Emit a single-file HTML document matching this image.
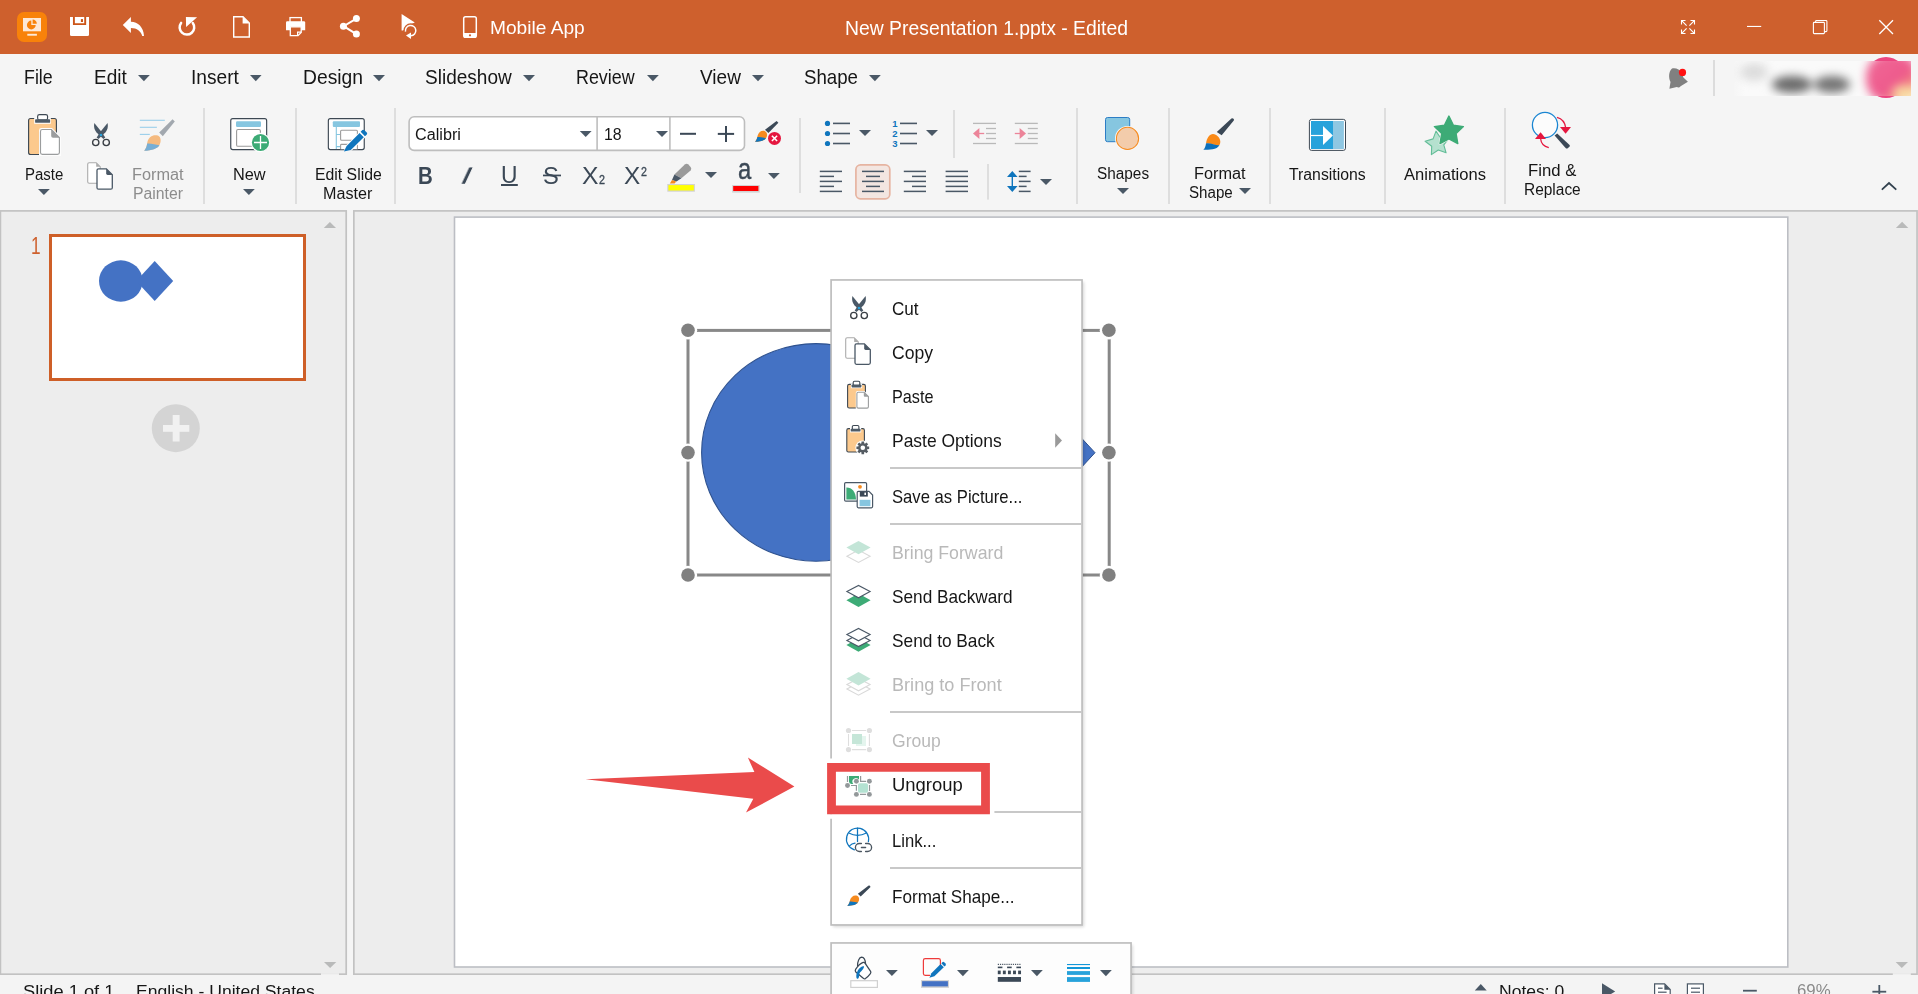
<!DOCTYPE html>
<html lang="en">
<head>
<meta charset="utf-8">
<title>New Presentation 1.pptx - Edited</title>
<style>
html,body{margin:0;padding:0;background:#F5F5F5;}
body{width:1918px;height:994px;overflow:hidden;font-family:"Liberation Sans",sans-serif;}
#app{position:relative;width:1918px;height:994px;overflow:hidden;background:#F5F5F5;}
#app div,#app span,#app svg,#app button,#app li,#app ul,#app header,#app nav,#app section,#app aside,#app main,#app footer{position:absolute;margin:0;padding:0;border:0;background:none;list-style:none;}
#app .grp{position:static;}
.t{white-space:nowrap;transform-origin:0 0;display:block;}
.i{overflow:visible;display:block;}
</style>
</head>
<body>
<div id="app">
<header class="grp" id="titlebar">
<div class="b bar" style="left:0px;top:0px;width:1918px;height:54px;background:#CE602D;"></div>
<svg class="i" style="left:17px;top:12px;" width="30" height="30" viewBox="17 12 30 30"><rect x="17" y="12" width="30" height="30" rx="7" fill="#F8820A"/><rect x="23" y="18" width="18" height="13.3" fill="#FDE8D6"/><path d="M31.3 20.6 A4.4 4.4 0 1 0 35.7 25 H31.3 Z" fill="#F8820A"/><path d="M32.6 19.6 A4.2 4.2 0 0 1 36.8 23.8 H32.6 Z" fill="#F8820A"/><rect x="27.3" y="33.8" width="9.6" height="1.9" fill="#FDE8D6"/></svg>
<svg class="i" style="left:70px;top:17px;" width="19" height="19" viewBox="70 17 19 19"><path d="M70 17 H89 V34.5 Q89 36 87.5 36 H71.5 Q70 36 70 34.5 Z" fill="#fff"/><path d="M73.9 16.6 V24.1 H85.2 V16.6" fill="none" stroke="#CB5519" stroke-width="1.9"/><rect x="80.9" y="19.1" width="2.1" height="2.9" fill="#CB5519"/></svg>
<svg class="i" style="left:123px;top:17px;" width="21" height="19" viewBox="123 17 21 19"><path d="M122.8 24.9 L130.9 17.1 V21.8 C138 21.8 143.5 27.4 144 35.9 H142.2 C141 31.2 137 27.9 130.9 27.9 V33 Z" fill="#fff"/></svg>
<svg class="i" style="left:178px;top:16px;" width="20" height="21" viewBox="178 16 20 21"><path d="M181.1 22.9 A7.3 7.3 0 1 0 192.8 23" fill="none" stroke="#fff" stroke-width="2.5" stroke-linecap="round"/><path d="M185.9 17.1 L197.1 17.3 L186.1 27 Z" fill="#fff"/></svg>
<svg class="i" style="left:232px;top:15px;" width="19" height="24" viewBox="232 15 19 24"><path d="M233.7 16.7 H243 L249.3 23 V37 H233.7 Z" fill="none" stroke="#fff" stroke-width="1.4"/><path d="M242.6 16.7 L249.3 23.4 H242.6 Z" fill="#fff"/></svg>
<svg class="i" style="left:286px;top:16px;" width="19" height="21" viewBox="286 16 19 21"><rect x="290" y="17.6" width="11.4" height="5" fill="none" stroke="#fff" stroke-width="1.3"/><path d="M287.2 21.2 H303.8 Q305.2 21.2 305.2 22.6 V30.2 H286 V22.6 Q286 21.2 287.2 21.2 Z" fill="#fff"/><path d="M290.3 26.8 H301.2 V32.5 L298 35.6 H290.3 Z" fill="#CE602D" stroke="#fff" stroke-width="1.3"/><path d="M301.2 32.2 H297.6 V35.6" fill="none" stroke="#fff" stroke-width="1.2"/></svg>
<svg class="i" style="left:339px;top:14px;" width="22" height="25" viewBox="339 14 22 25"><path d="M356.4 18.6 L343.6 26.2 L356.4 34.1" fill="none" stroke="#fff" stroke-width="2"/><circle cx="356.4" cy="18.6" r="3.5" fill="#fff"/><circle cx="343.4" cy="26.2" r="3.5" fill="#fff"/><circle cx="356.4" cy="34.1" r="3.5" fill="#fff"/></svg>
<svg class="i" style="left:400px;top:13px;" width="19" height="27" viewBox="400 13 19 27"><path d="M401.6 14 L414.8 22.4 L410 24.4 L403.2 30.6 L401.6 30.6 Z" fill="#fff"/><circle cx="410.7" cy="30.6" r="5.2" fill="none" stroke="#CE602D" stroke-width="4.2"/><path d="M405.5 31.6 A5.2 5.2 0 1 1 410.9 35.8" fill="none" stroke="#fff" stroke-width="1.5"/><path d="M406 35.6 L411 32.4 V39 Z" fill="#fff"/></svg>
<svg class="i" style="left:462px;top:15px;" width="16" height="24" viewBox="462 15 16 24"><rect x="463.7" y="16.7" width="12.6" height="20.6" rx="1.8" fill="none" stroke="#fff" stroke-width="1.5"/><path d="M463.7 33 H476.3 V36 Q476.3 37.4 475 37.4 H465 Q463.7 37.4 463.7 36 Z" fill="#fff"/><circle cx="470" cy="35.3" r="1.1" fill="#CE602D"/></svg>
<span class="t tx0" style="left:490.07px;top:17px;font-size:19.25px;line-height:21px;color:#fff;transform:scaleX(0.9948);">Mobile App</span>
<span class="t title tx1" style="left:844.63px;top:17px;font-size:19.50px;line-height:22px;color:#fff;transform:scaleX(0.9925);">New Presentation 1.pptx - Edited</span>
<svg class="i" style="left:1680px;top:19px;" width="16" height="16" viewBox="1680 19 16 16"><g fill="none" stroke="#fff" stroke-width="1.1"><path d="M1681.5 24.5 V20.5 H1685.5 M1681.7 20.7 L1686.6 25.6"/><path d="M1690.5 20.5 H1694.5 V24.5 M1694.3 20.7 L1689.4 25.6"/><path d="M1681.5 29.5 V33.5 H1685.5 M1681.7 33.3 L1686.6 28.4"/><path d="M1690.5 33.5 H1694.5 V29.5 M1694.3 33.3 L1689.4 28.4"/></g></svg>
<svg class="i" style="left:1746px;top:25px;" width="16" height="3" viewBox="1746 25 16 3"><rect x="1747" y="25.9" width="14.2" height="1.1" fill="#fff"/></svg>
<svg class="i" style="left:1812px;top:19px;" width="16" height="16" viewBox="1812 19 16 16"><g fill="none" stroke="#fff" stroke-width="1.1"><rect x="1813.4" y="22.4" width="11" height="11.2" rx="0.8"/><path d="M1815.6 22.4 V21.4 Q1815.6 20.5 1816.5 20.5 H1826 Q1826.9 20.5 1826.9 21.4 V30.8 Q1826.9 31.6 1826 31.6 H1824.6"/></g></svg>
<svg class="i" style="left:1878px;top:19px;" width="16" height="16" viewBox="1878 19 16 16"><path d="M1879.3 20.3 L1893 34 M1893 20.3 L1879.3 34" fill="none" stroke="#fff" stroke-width="1.3"/></svg>
</header>
<nav class="grp" id="menubar">
<span class="t menu tx2" style="left:23.52px;top:66px;font-size:20.25px;line-height:22px;color:#161616;transform:scaleX(0.8792);">File</span>
<span class="t menu tx3" style="left:94.33px;top:66px;font-size:20.25px;line-height:22px;color:#161616;transform:scaleX(0.9409);">Edit</span>
<svg class="i arr" style="left:137px;top:73.8px;" width="13.8" height="8.2" viewBox="137 73.8 13.8 8.2"><polygon points="138,74.8 149.8,74.8 143.9,81" fill="#4a5866"/></svg>
<span class="t menu tx4" style="left:190.81px;top:66px;font-size:20.25px;line-height:22px;color:#161616;transform:scaleX(0.9460);">Insert</span>
<svg class="i arr" style="left:249.4px;top:73.8px;" width="13.6" height="8.2" viewBox="249.4 73.8 13.6 8.2"><polygon points="250.4,74.8 262,74.8 256.2,81" fill="#4a5866"/></svg>
<span class="t menu tx5" style="left:303.32px;top:66px;font-size:20.25px;line-height:22px;color:#161616;transform:scaleX(0.9517);">Design</span>
<svg class="i arr" style="left:372px;top:73.8px;" width="14" height="8.2" viewBox="372 73.8 14 8.2"><polygon points="373,74.8 385,74.8 379,81" fill="#4a5866"/></svg>
<span class="t menu tx6" style="left:425.44px;top:66px;font-size:20.25px;line-height:22px;color:#161616;transform:scaleX(0.9395);">Slideshow</span>
<svg class="i arr" style="left:522px;top:73.8px;" width="14" height="8.2" viewBox="522 73.8 14 8.2"><polygon points="523,74.8 535,74.8 529,81" fill="#4a5866"/></svg>
<span class="t menu tx7" style="left:575.96px;top:66px;font-size:20.25px;line-height:22px;color:#161616;transform:scaleX(0.8830);">Review</span>
<svg class="i arr" style="left:646px;top:73.8px;" width="13.8" height="8.2" viewBox="646 73.8 13.8 8.2"><polygon points="647,74.8 658.8,74.8 652.9,81" fill="#4a5866"/></svg>
<span class="t menu tx8" style="left:699.91px;top:66px;font-size:20.25px;line-height:22px;color:#161616;transform:scaleX(0.9388);">View</span>
<svg class="i arr" style="left:751px;top:73.8px;" width="14" height="8.2" viewBox="751 73.8 14 8.2"><polygon points="752,74.8 764,74.8 758,81" fill="#4a5866"/></svg>
<span class="t menu tx9" style="left:804.36px;top:66px;font-size:20.25px;line-height:22px;color:#161616;transform:scaleX(0.9224);">Shape</span>
<svg class="i arr" style="left:868px;top:73.8px;" width="13.8" height="8.2" viewBox="868 73.8 13.8 8.2"><polygon points="869,74.8 880.8,74.8 874.9,81" fill="#4a5866"/></svg>
<svg class="i" style="left:1666px;top:66px;" width="24" height="24" viewBox="1666 66 24 24"><path d="M1672 68.5 C1675 67.4 1680 69 1682 73.2 L1683.4 77.4 L1687.9 81.7 L1680.6 86.2 C1679.6 87.6 1678 87.8 1676.8 87 L1669.4 88.8 L1670.5 82 C1668.4 77.6 1668.6 71.4 1672 68.5 Z" fill="#808080"/><circle cx="1682.5" cy="72.4" r="3.6" fill="#FF1010"/></svg>
<div class="b sep" style="left:1713.3px;top:60px;width:1.6px;height:36px;background:#DCDCDC;"></div>
<div class="b avatar" style="left:1866px;top:57px;width:40px;height:41px;border-radius:50%;background:#EC4580;"></div>
<div class="b blur" style="left:1734px;top:61px;width:177px;height:35px;overflow:hidden;background:linear-gradient(90deg,#F6F6F6 0,#FAFAFA 12px,#FAFAFA 100%);"><div style="left:0;top:0;width:177px;height:35px;filter:blur(5px);"><div style="left:6px;top:2px;width:28px;height:18px;border-radius:50%;background:#DCDCDC;"></div><div style="left:38px;top:15px;width:40px;height:17px;border-radius:50%;background:#6A6A6A;"></div><div style="left:80px;top:15px;width:36px;height:17px;border-radius:50%;background:#747474;"></div><div style="left:132px;top:-8px;width:52px;height:50px;border-radius:46%;background:linear-gradient(135deg,#F06A98 0%,#EE5A8C 58%,#F28C7E 78%,#F7C98E 100%);"></div><div style="left:158px;top:24px;width:26px;height:16px;border-radius:50%;background:#F8D9A0;"></div></div></div>
</nav><section class="grp" id="toolbar">
<svg class="i sep" style="left:201.75px;top:108px;" width="4" height="96" viewBox="201.75 108 4 96"><rect x="202.9" y="108" width="1.7" height="96" fill="#DADADA"/></svg>
<svg class="i sep" style="left:294px;top:108px;" width="4" height="96" viewBox="294 108 4 96"><rect x="295.15" y="108" width="1.7" height="96" fill="#DADADA"/></svg>
<svg class="i sep" style="left:392.6px;top:108px;" width="4" height="96" viewBox="392.6 108 4 96"><rect x="393.75" y="108" width="1.7" height="96" fill="#DADADA"/></svg>
<svg class="i sep" style="left:797.8px;top:118px;" width="4" height="75" viewBox="797.8 118 4 75"><rect x="798.95" y="118" width="1.7" height="75" fill="#DADADA"/></svg>
<svg class="i sep" style="left:951.8px;top:110px;" width="4" height="48" viewBox="951.8 110 4 48"><rect x="952.95" y="110" width="1.7" height="48" fill="#DADADA"/></svg>
<svg class="i sep" style="left:985.5px;top:164px;" width="4" height="35.6" viewBox="985.5 164 4 35.6"><rect x="986.65" y="164" width="1.7" height="35.6" fill="#DADADA"/></svg>
<svg class="i sep" style="left:1075px;top:108px;" width="4" height="96" viewBox="1075 108 4 96"><rect x="1076.15" y="108" width="1.7" height="96" fill="#DADADA"/></svg>
<svg class="i sep" style="left:1166.8px;top:108px;" width="4" height="96" viewBox="1166.8 108 4 96"><rect x="1167.95" y="108" width="1.7" height="96" fill="#DADADA"/></svg>
<svg class="i sep" style="left:1267.8px;top:108px;" width="4" height="96" viewBox="1267.8 108 4 96"><rect x="1268.95" y="108" width="1.7" height="96" fill="#DADADA"/></svg>
<svg class="i sep" style="left:1382.8px;top:108px;" width="4" height="96" viewBox="1382.8 108 4 96"><rect x="1383.95" y="108" width="1.7" height="96" fill="#DADADA"/></svg>
<svg class="i sep" style="left:1503px;top:108px;" width="4" height="96" viewBox="1503 108 4 96"><rect x="1504.15" y="108" width="1.7" height="96" fill="#DADADA"/></svg>
<svg class="i" style="left:27px;top:113px;" width="34" height="43" viewBox="27 113 34 43"><rect x="28.6" y="118.5" width="27.8" height="36" rx="2" fill="#FCC98D" stroke="#3d4853" stroke-width="1.15"/><rect x="34.2" y="117.6" width="16.6" height="6.2" fill="#FDFDFD"/><rect x="37.65" y="114.55" width="9.9" height="5.6" rx="1.8" fill="#fff" stroke="#3d4853" stroke-width="1.15"/><rect x="35.1" y="119.2" width="15" height="3.6" rx="0.9" fill="#4E5B67"/><path d="M41.4 128 H52 L61 137 V156 H39 V130.4 Q39 128 41.4 128 Z" fill="#FDFDFD"/><path d="M42.4 129.5 H51.4 L59.4 137.5 V152.4 Q59.4 154.3 57.5 154.3 H42.4 Q40.5 154.3 40.5 152.4 V131.4 Q40.5 129.5 42.4 129.5 Z" fill="#fff" stroke="#9B9D9E" stroke-width="1.15"/><path d="M51.2 129.3 L59.6 137.7 H53 Q51.2 137.7 51.2 135.9 Z" fill="#9B9D9E"/></svg>
<span class="t tx10" style="left:24.80px;top:164px;font-size:17.25px;line-height:20px;color:#161616;transform:scaleX(0.8688);">Paste</span>
<svg class="i arr" style="left:37.2px;top:188px;" width="13.8" height="8" viewBox="37.2 188 13.8 8"><polygon points="38.2,189 50,189 44.1,195" fill="#4a5866"/></svg>
<svg class="i" style="left:91px;top:122px;" width="20" height="25" viewBox="91 122 20 25"><path d="M94.30 123.00 L101.25 131.40 L105.25 137.40 L103.45 138.90 L98.55 134.40 C95.35 131.40 93.35 128.60 94.30 123.00 Z" fill="#4a5866"/><path d="M107.60 123.00 L100.65 131.40 L96.65 137.40 L98.45 138.90 L103.35 134.40 C106.55 131.40 108.55 128.60 107.60 123.00 Z" fill="#4a5866"/><circle cx="95.75" cy="142.45" r="3.15" fill="none" stroke="#3a3f45" stroke-width="1.35"/><circle cx="106.25" cy="142.45" r="3.15" fill="none" stroke="#3a3f45" stroke-width="1.35"/><rect x="99.80" y="133.90" width="2.30" height="2.20" fill="#27A2DB"/></svg>
<svg class="i" style="left:86px;top:161px;" width="28" height="30" viewBox="86 161 28 30"><path d="M89.20 162.70 H96.20 L100.20 166.70 V183.20 H89.20 Q87.70 183.20 87.70 181.70 V164.20 Q87.70 162.70 89.20 162.70 Z" fill="#fff" stroke="#ABABAB" stroke-width="1.10"/><path d="M96.20 162.80 L100.20 166.80 H96.20 Z" fill="#ABABAB"/><path d="M98.50 168.80 H106.40 L112.30 174.70 V187.70 Q112.30 189.20 110.80 189.20 H98.50 Q97.00 189.20 97.00 187.70 V170.30 Q97.00 168.80 98.50 168.80 Z" fill="#fff" stroke="#4a5866" stroke-width="1.30"/><path d="M106.20 168.60 L112.50 174.90 H107.60 Q106.20 174.90 106.20 173.50 Z" fill="#4a5866"/></svg>
<svg class="i" style="left:139px;top:118px;" width="37" height="34" viewBox="139 118 37 34"><g opacity="0.55"><rect x="139.8" y="119.75" width="25" height="1.1" fill="#4FB0E2"/><rect x="139.8" y="126.75" width="17.1" height="1.1" fill="#4FB0E2"/><rect x="139.8" y="133.85" width="10" height="1.1" fill="#4FB0E2"/><path d="M172.6 119.2 L174.8 121.4 L162.8 136.2 L159.2 132.6 Z" fill="#5F6B76"/><path d="M147.4 142 C148.6 136.6 153.4 134 158 135.6 C161 137 161.6 141.6 159.2 145.6 C157.6 148.4 152 150.6 144.2 150.8 C146.2 148.6 146.8 145.6 147.4 142 Z" fill="#F68B1F"/><path d="M147.2 143.6 C151 143.2 155.6 145 159.4 145.2 C157.6 148.4 152 150.6 144.2 150.8 C146 148.8 146.8 146.4 147.2 143.6 Z" fill="#0F75BD"/></g></svg>
<span class="t tx11" style="left:132.10px;top:164px;font-size:17.25px;line-height:20px;color:#8c8c8c;transform:scaleX(0.9449);">Format</span>
<span class="t tx12" style="left:133.13px;top:183px;font-size:17.25px;line-height:20px;color:#8c8c8c;transform:scaleX(0.9158);">Painter</span>
<svg class="i" style="left:229px;top:117px;" width="42" height="36" viewBox="229 117 42 36"><rect x="230.75" y="118.65" width="35.9" height="30.9" rx="2" fill="#fff" stroke="#3d4853" stroke-width="1.15"/><rect x="236" y="121.2" width="25" height="5.7" rx="1.2" fill="#86C6E0"/><rect x="236.6" y="129.5" width="23.8" height="16.8" rx="1.4" fill="#fff" stroke="#9A9A9A" stroke-width="1.1"/><circle cx="260.5" cy="142.5" r="9.7" fill="#fff"/><circle cx="260.5" cy="142.5" r="8.6" fill="#3DAB76"/><path d="M254 142.5 H267 M260.5 136 V149" stroke="#fff" stroke-width="1.3" fill="none"/></svg>
<span class="t tx13" style="left:232.69px;top:164px;font-size:17.25px;line-height:20px;color:#161616;transform:scaleX(0.9462);">New</span>
<svg class="i arr" style="left:242px;top:188px;" width="13.8" height="8" viewBox="242 188 13.8 8"><polygon points="243,189 254.8,189 248.9,195" fill="#4a5866"/></svg>
<svg class="i" style="left:326px;top:117px;" width="43" height="36" viewBox="326 117 43 36"><rect x="328.35" y="118.65" width="35.9" height="30.9" rx="2" fill="#fff" stroke="#3d4853" stroke-width="1.15"/><rect x="332.8" y="121.3" width="27.2" height="5.6" rx="1" fill="#86C6E0"/><path d="M336.3 127 V149 M336.3 134.5 H340.4 M336.3 146.6 H340.4" stroke="#86C6E0" stroke-width="1.1" fill="none"/><rect x="340.6" y="130.2" width="16.8" height="10" rx="1" fill="#fff" stroke="#9C9C9C" stroke-width="1.1"/><path d="M340.6 149.2 V145.2 Q340.6 144.4 341.4 144.4 H356.6 Q357.4 144.4 357.4 145.2 V149.2" fill="#fff" stroke="#9C9C9C" stroke-width="1.1"/><path d="M343.4 151.8 L346.2 145.2 L360.6 130.8 L366.2 136.4 L351.8 150.4 Z" fill="#fff"/><path d="M343.9 151.5 L346.6 146 L359.6 133 L363.8 137.2 L350.8 150 Z" fill="#0F75BD"/><path d="M360.6 131.8 L362.4 130 Q363.4 129.2 364.4 130.2 L366.8 132.6 Q367.6 133.6 366.8 134.4 L365 136.2 Z" fill="#0F75BD"/></svg>
<span class="t tx14" style="left:315.13px;top:164px;font-size:17.25px;line-height:20px;color:#161616;transform:scaleX(0.9158);">Edit Slide</span>
<span class="t tx15" style="left:322.71px;top:183px;font-size:17.25px;line-height:20px;color:#161616;transform:scaleX(0.9353);">Master</span>
<svg class="i combo" style="left:407px;top:115px;" width="340" height="38" viewBox="407 115 340 38"><rect x="409.1" y="116.8" width="335.4" height="33.6" rx="5" fill="#fff" stroke="#BEBEBE" stroke-width="1.6"/><rect x="596.3" y="117" width="1.6" height="33.4" fill="#BEBEBE"/><rect x="669.1" y="117" width="1.6" height="33.4" fill="#BEBEBE"/><polygon points="579.8,131 591.6,131 585.7,137" fill="#4a5866"/><polygon points="656,131 668,131 662,137" fill="#4a5866"/><rect x="680" y="132.8" width="16" height="2" fill="#3b4856"/><rect x="717.8" y="132.9" width="16.3" height="2" fill="#3b4856"/><rect x="725" y="126" width="2" height="16" fill="#3b4856"/></svg>
<span class="t tx16" style="left:415.06px;top:124px;font-size:17.25px;line-height:20px;color:#161616;transform:scaleX(0.9383);">Calibri</span>
<span class="t tx17" style="left:603.61px;top:124px;font-size:17.25px;line-height:20px;color:#161616;transform:scaleX(0.9205);">18</span>
<svg class="i" style="left:754px;top:120px;" width="29" height="27" viewBox="754 120 29 27"><path d="M776.6 121 L778.4 122.8 L768.4 133 L765 129.8 Z" fill="#3b4856"/><path d="M757.6 135.8 C758.6 132 762 130 765 131.2 C767.4 132.4 767.8 135.6 766 138.2 C764.6 140.4 760.6 141.6 755 141.8 C756.6 140 757.2 138 757.6 135.8 Z" fill="#F68B1F"/><path d="M757.4 137 C760.4 136.6 763.4 137.8 766 138.2 C764.6 140.4 760.6 141.6 755 141.8 C756.4 140.4 757 138.8 757.4 137 Z" fill="#0F75BD"/><circle cx="774.5" cy="138.4" r="7.6" fill="#F5F5F5"/><circle cx="774.5" cy="138.4" r="6.5" fill="#E5173F"/><path d="M771.9 135.8 L777.1 141 M777.1 135.8 L771.9 141" stroke="#fff" stroke-width="1.6" fill="none"/></svg>
<span class="t fb tx18" style="left:418.42px;top:162px;font-size:24.25px;line-height:27px;color:#3b4856;transform:scaleX(0.8414);font-weight:700;">B</span>
<span class="t fb it" style="left:459.90px;top:162px;font-size:24px;line-height:27px;color:#3b4856;font-weight:700;transform-origin:0 22px;transform:skewX(-25deg) scaleX(0.95);will-change:transform;">I</span>
<span class="t fb tx19" style="left:501.15px;top:161px;font-size:23.84px;line-height:27px;color:#3b4856;transform:scaleX(0.9552);">U</span>
<svg class="i" style="left:500px;top:183px;" width="19" height="4" viewBox="500 183 19 4"><rect x="501" y="184" width="16.8" height="2" fill="#3b4856"/></svg>
<span class="t fb tx20" style="left:542.93px;top:162px;font-size:24.25px;line-height:27px;color:#3b4856;transform:scaleX(0.9788);">S</span>
<svg class="i" style="left:542px;top:174px;" width="20" height="4" viewBox="542 174 20 4"><rect x="543" y="174.6" width="18" height="1.7" fill="#3b4856"/></svg>
<span class="t fb tx21" style="left:581.78px;top:162px;font-size:23.84px;line-height:27px;color:#3b4856;transform:scaleX(1.0352);">X</span>
<span class="t fb tx22" style="left:598.59px;top:172px;font-size:12.75px;line-height:15px;color:#3b4856;transform:scaleX(0.8408);-webkit-text-stroke:0.35px #3b4856;">2</span>
<span class="t fb tx23" style="left:623.66px;top:162px;font-size:23.84px;line-height:27px;color:#3b4856;transform:scaleX(1.0204);">X</span>
<span class="t fb tx24" style="left:640.94px;top:164px;font-size:13.00px;line-height:15px;color:#3b4856;transform:scaleX(0.8183);-webkit-text-stroke:0.35px #3b4856;">2</span>
<svg class="i" style="left:666px;top:162px;" width="30" height="31" viewBox="666 162 30 31"><path d="M684.8 164.6 Q686.6 163 688.4 164.6 L690.6 167 Q692 168.8 690.6 170.6 L681.4 178.2 L674.4 174.4 Z" fill="#9A9A9A"/><path d="M674.4 174.4 L681.4 178.2 L676.4 181.6 L672 180 Z" fill="#4a5866"/><path d="M672 180 L676.2 181.6 L674.6 183.4 L669.8 183.4 Z" fill="#F68B1F"/><rect x="667.3" y="184" width="27.6" height="7.7" fill="#D2D2D2"/><rect x="668.4" y="185.1" width="25.4" height="5.4" fill="#FFFF00"/></svg>
<svg class="i arr" style="left:704px;top:171px;" width="14" height="8" viewBox="704 171 14 8"><polygon points="705,172 717,172 711,178" fill="#4a5866"/></svg>
<span class="t fb tx25" style="left:737.86px;top:152px;font-size:30.00px;line-height:33px;color:#3b4856;transform:scaleX(0.7940);-webkit-text-stroke:0.45px #3b4856;">a</span>
<svg class="i" style="left:731px;top:184px;" width="30" height="9" viewBox="731 184 30 9"><rect x="732.2" y="185" width="27.5" height="7.6" fill="#D2D2D2"/><rect x="733.2" y="186" width="25.2" height="5" fill="#FF0000"/></svg>
<svg class="i arr" style="left:767px;top:172px;" width="13.8" height="8" viewBox="767 172 13.8 8"><polygon points="768,173 779.8,173 773.9,179" fill="#4a5866"/></svg>
<svg class="i" style="left:823px;top:119px;" width="30" height="29" viewBox="823 119 30 29"><circle cx="827.5" cy="123.4" r="2.6" fill="#0F75BD"/><rect x="833" y="122.6" width="17" height="1.6" fill="#4a5866"/><circle cx="827.5" cy="133.5" r="2.6" fill="#0F75BD"/><rect x="833" y="132.7" width="17" height="1.6" fill="#4a5866"/><circle cx="827.5" cy="143.5" r="2.6" fill="#0F75BD"/><rect x="833" y="142.7" width="17" height="1.6" fill="#4a5866"/></svg>
<svg class="i arr" style="left:858px;top:129px;" width="14" height="8" viewBox="858 129 14 8"><polygon points="859,130 871,130 865,136" fill="#4a5866"/></svg>
<svg class="i" style="left:890px;top:117px;" width="30" height="32" viewBox="890 117 30 32"><text x="894.8" y="126.7" font-family="Liberation Sans, sans-serif" font-size="9.5" font-weight="700" fill="#0F75BD" text-anchor="middle">1</text><rect x="900" y="122.6" width="17" height="1.6" fill="#4a5866"/><text x="894.8" y="136.8" font-family="Liberation Sans, sans-serif" font-size="9.5" font-weight="700" fill="#0F75BD" text-anchor="middle">2</text><rect x="900" y="132.7" width="17" height="1.6" fill="#4a5866"/><text x="894.8" y="146.8" font-family="Liberation Sans, sans-serif" font-size="9.5" font-weight="700" fill="#0F75BD" text-anchor="middle">3</text><rect x="900" y="142.7" width="17" height="1.6" fill="#4a5866"/></svg>
<svg class="i arr" style="left:925px;top:129px;" width="14" height="8" viewBox="925 129 14 8"><polygon points="926,130 938,130 932,136" fill="#4a5866"/></svg>
<svg class="i" style="left:972px;top:121px;" width="26" height="25" viewBox="972 121 26 25"><rect x="973" y="122.75" width="23" height="1.3" fill="#B9B9B9"/><rect x="973" y="142.85" width="23" height="1.3" fill="#B9B9B9"/><rect x="986" y="127.85" width="10" height="1.3" fill="#B9B9B9"/><rect x="986" y="132.85" width="10" height="1.3" fill="#B9B9B9"/><rect x="986" y="137.85" width="10" height="1.3" fill="#B9B9B9"/><path d="M973 133.5 L979.4 128 V139 Z" fill="#EC8499"/><rect x="979" y="132.85" width="5.2" height="1.3" fill="#EC8499"/></svg>
<svg class="i" style="left:1013px;top:121px;" width="26" height="25" viewBox="1013 121 26 25"><rect x="1014.8" y="122.75" width="23" height="1.3" fill="#B9B9B9"/><rect x="1014.8" y="142.85" width="23" height="1.3" fill="#B9B9B9"/><rect x="1027.8" y="127.85" width="10" height="1.3" fill="#B9B9B9"/><rect x="1027.8" y="132.85" width="10" height="1.3" fill="#B9B9B9"/><rect x="1027.8" y="137.85" width="10" height="1.3" fill="#B9B9B9"/><path d="M1026 133.5 L1019.6 128 V139 Z" fill="#EC8499"/><rect x="1014.8" y="132.85" width="5.2" height="1.3" fill="#EC8499"/></svg>
<svg class="i" style="left:818px;top:169px;" width="26" height="25" viewBox="818 169 26 25"><rect x="819.8" y="170.65" width="22.2" height="1.5" fill="#4a5866"/><rect x="819.8" y="175.65" width="14.2" height="1.5" fill="#4a5866"/><rect x="819.8" y="180.65" width="22.2" height="1.5" fill="#4a5866"/><rect x="819.8" y="185.65" width="14.2" height="1.5" fill="#4a5866"/><rect x="819.8" y="190.65" width="22.2" height="1.5" fill="#4a5866"/></svg>
<svg class="i active" style="left:854px;top:163px;" width="38" height="38" viewBox="854 163 38 38"><rect x="855.9" y="164.9" width="33.9" height="33.9" rx="4.6" fill="#F3E6E1" stroke="#E6B4A1" stroke-width="1.7"/></svg>
<svg class="i" style="left:860px;top:169px;" width="26" height="25" viewBox="860 169 26 25"><rect x="862" y="170.65" width="22" height="1.5" fill="#4a5866"/><rect x="866" y="175.65" width="14" height="1.5" fill="#4a5866"/><rect x="862" y="180.65" width="22" height="1.5" fill="#4a5866"/><rect x="866" y="185.65" width="14" height="1.5" fill="#4a5866"/><rect x="862" y="190.65" width="22" height="1.5" fill="#4a5866"/></svg>
<svg class="i" style="left:902px;top:169px;" width="26" height="25" viewBox="902 169 26 25"><rect x="903.8" y="170.65" width="22.2" height="1.5" fill="#4a5866"/><rect x="912" y="175.65" width="14" height="1.5" fill="#4a5866"/><rect x="903.8" y="180.65" width="22.2" height="1.5" fill="#4a5866"/><rect x="912" y="185.65" width="14" height="1.5" fill="#4a5866"/><rect x="903.8" y="190.65" width="22.2" height="1.5" fill="#4a5866"/></svg>
<svg class="i" style="left:944px;top:169px;" width="26" height="25" viewBox="944 169 26 25"><rect x="945.6" y="170.65" width="22.4" height="1.5" fill="#4a5866"/><rect x="945.6" y="175.65" width="22.4" height="1.5" fill="#4a5866"/><rect x="945.6" y="180.65" width="22.4" height="1.5" fill="#4a5866"/><rect x="945.6" y="185.65" width="22.4" height="1.5" fill="#4a5866"/><rect x="945.6" y="190.65" width="22.4" height="1.5" fill="#4a5866"/></svg>
<svg class="i" style="left:1006px;top:169px;" width="26" height="25" viewBox="1006 169 26 25"><path d="M1012.3 171 L1017.6 177 H1007 Z M1012.3 192 L1017.6 186 H1007 Z" fill="#0F75BD"/><rect x="1011.6" y="176" width="1.4" height="11" fill="#0F75BD"/><rect x="1018.8" y="170.65" width="11.8" height="1.5" fill="#4a5866"/><rect x="1018.8" y="175.65" width="7.8" height="1.5" fill="#4a5866"/><rect x="1018.8" y="180.65" width="11.8" height="1.5" fill="#4a5866"/><rect x="1018.8" y="185.65" width="7.8" height="1.5" fill="#4a5866"/><rect x="1018.8" y="190.65" width="11.8" height="1.5" fill="#4a5866"/></svg>
<svg class="i arr" style="left:1039px;top:178px;" width="14" height="8" viewBox="1039 178 14 8"><polygon points="1040,179 1052,179 1046,185" fill="#4a5866"/></svg>
<svg class="i" style="left:1104px;top:116px;" width="37" height="36" viewBox="1104 116 37 36"><rect x="1105.5" y="117.5" width="24.2" height="24.2" rx="2" fill="#86C6E0" stroke="#2C7DC5" stroke-width="1"/><circle cx="1127.5" cy="138.4" r="12.5" fill="#F7F7F7"/><circle cx="1127.5" cy="138.4" r="11.1" fill="#F3CCAB" stroke="#F68B1F" stroke-width="1.05"/></svg>
<span class="t tx26" style="left:1097.11px;top:163px;font-size:17.25px;line-height:20px;color:#161616;transform:scaleX(0.8897);">Shapes</span>
<svg class="i arr" style="left:1116px;top:187px;" width="14" height="8" viewBox="1116 187 14 8"><polygon points="1117,188 1129,188 1123,194" fill="#4a5866"/></svg>
<svg class="i" style="left:1202px;top:117px;" width="34" height="34" viewBox="1202 117 34 34"><path d="M1231.40 118.50 Q1232.60 117.80 1233.50 118.70 Q1234.50 119.60 1233.80 120.60 L1221.70 135.20 L1216.80 131.90 Z" fill="#3b4856"/><path d="M1206.00 143.80 C1206.60 138.00 1209.60 134.00 1213.00 134.00 C1216.60 134.20 1220.20 137.80 1220.30 141.40 C1220.30 143.00 1219.90 144.20 1219.20 145.40 C1214.00 145.80 1210.00 142.80 1206.00 143.80 Z" fill="#FA8A18"/><path d="M1206.00 143.40 C1209.60 142.40 1214.40 145.00 1219.30 145.20 C1218.20 147.40 1215.60 148.80 1212.60 149.20 C1209.60 149.70 1206.00 149.80 1203.30 149.80 C1204.80 148.40 1205.60 146.20 1206.00 143.40 Z" fill="#0C70BC"/></svg>
<span class="t tx27" style="left:1194.20px;top:163px;font-size:17.25px;line-height:20px;color:#161616;transform:scaleX(0.9449);">Format</span>
<span class="t tx28" style="left:1188.97px;top:182px;font-size:17.25px;line-height:20px;color:#161616;transform:scaleX(0.8771);">Shape</span>
<svg class="i arr" style="left:1238px;top:187px;" width="14" height="8" viewBox="1238 187 14 8"><polygon points="1239,188 1251,188 1245,194" fill="#4a5866"/></svg>
<svg class="i" style="left:1308px;top:118px;" width="39" height="34" viewBox="1308 118 39 34"><rect x="1309.4" y="119.35" width="36.1" height="31.05" rx="2.2" fill="#fff" stroke="#3d4853" stroke-width="1"/><rect x="1311" y="121" width="22" height="28" fill="#27A2DB"/><rect x="1333" y="121" width="10.9" height="28" fill="#8FC7E2"/><rect x="1310.6" y="134.9" width="12.8" height="1.2" fill="#fff"/><path d="M1323 125.9 L1332.9 135.5 L1323 145.1 Z" fill="#fff"/></svg>
<span class="t tx29" style="left:1288.88px;top:164px;font-size:17.25px;line-height:20px;color:#161616;transform:scaleX(0.9156);">Transitions</span>
<svg class="i" style="left:1424px;top:115px;" width="42" height="40" viewBox="1424 115 42 40"><path d="M1436.0 131.1 L1440.6 138.0 L1448.9 138.3 L1443.8 144.8 L1446.1 152.8 L1438.3 150.0 L1431.4 154.6 L1431.7 146.3 L1425.1 141.2 L1433.1 138.9 Z" fill="#B5E1CF" stroke="#62BD97" stroke-width="1.1" stroke-linejoin="round"/><path d="M1448.9 116.1 L1453.4 125.2 L1463.4 126.6 L1456.1 133.6 L1457.8 143.6 L1448.9 138.9 L1440.0 143.6 L1441.7 133.6 L1434.4 126.6 L1444.4 125.2 Z" fill="#F5F5F5" stroke="#F5F5F5" stroke-width="2.6" stroke-linejoin="round"/><path d="M1448.9 116.1 L1453.4 125.2 L1463.4 126.6 L1456.1 133.6 L1457.8 143.6 L1448.9 138.9 L1440.0 143.6 L1441.7 133.6 L1434.4 126.6 L1444.4 125.2 Z" fill="#3DAB76" stroke="#3DAB76" stroke-width="1.4" stroke-linejoin="round"/></svg>
<span class="t tx30" style="left:1404.30px;top:164px;font-size:17.25px;line-height:20px;color:#161616;transform:scaleX(0.9599);">Animations</span>
<svg class="i" style="left:1530px;top:110px;" width="43" height="40" viewBox="1530 110 43 40"><path d="M1554.6 135.6 L1557.2 133.6 L1569.6 145 Q1570.2 146 1569.4 146.8 L1567.4 148.4 Q1566.4 148.8 1565.6 148 Z" fill="#3b4856"/><circle cx="1545" cy="125" r="12.6" fill="#FCFCFC" stroke="#1B86D2" stroke-width="1.3"/><path d="M1557 117.3 C1561.6 118.6 1565 122.4 1565.6 127.4" fill="none" stroke="#E5173F" stroke-width="1.2"/><path d="M1560 127 H1571 L1565.6 133.8 Z" fill="#E5173F"/><path d="M1540.6 132.2 L1546 138.9 H1535 Z" fill="#E5173F"/><path d="M1540.6 138.6 C1541 143.2 1544.4 146.6 1548.8 147.6" fill="none" stroke="#E5173F" stroke-width="1.2"/></svg>
<span class="t tx31" style="left:1528.46px;top:160px;font-size:17.25px;line-height:20px;color:#161616;transform:scaleX(0.9685);">Find &amp;</span>
<span class="t tx32" style="left:1524.06px;top:179px;font-size:17.25px;line-height:20px;color:#161616;transform:scaleX(0.8961);">Replace</span>
<svg class="i" style="left:1880px;top:181px;" width="18" height="11" viewBox="1880 181 18 11"><path d="M1882.4 189.2 L1889 183 L1895.7 189.2" fill="none" stroke="#33424F" stroke-width="1.8" stroke-linecap="round" stroke-linejoin="miter"/></svg>
</section><aside class="grp" id="thumbnails">
<svg class="i panel" style="left:0px;top:209px;" width="348" height="767" viewBox="0 209 348 767"><rect x="0.4" y="210.9" width="345.8" height="763.3" fill="#EDEDED" stroke="#C2C2C2" stroke-width="1.7"/><rect x="321" y="973.2" width="18" height="2" fill="#F0F0F0"/><polygon points="323.8,228 336,228 329.9,222" fill="#B9BABA"/><polygon points="324,962 336.3,962 330.1,968" fill="#B9BABA"/></svg>
<span class="t num tx33" style="left:30.91px;top:233px;font-size:23.55px;line-height:26px;color:#CE602D;transform:scaleX(0.7322);">1</span>
<div class="b thumb" style="left:49px;top:234px;width:257px;height:147px;box-sizing:border-box;border:3px solid #CE5F28;background:#fff;"><svg class="i" style="left:0;top:0" width="251" height="141" viewBox="52 237 251 141"><ellipse cx="120.8" cy="281" rx="21.8" ry="20.7" fill="#4472C4"/><polygon points="136.2,281 154.7,261 173.2,281 154.7,301" fill="#4472C4"/></svg></div>
<svg class="i addslide" style="left:151px;top:403px;" width="50" height="50" viewBox="151 403 50 50"><circle cx="175.8" cy="428.2" r="24" fill="#D4D4D4"/><rect x="163" y="425" width="26.3" height="6.8" fill="#F1F1F1"/><rect x="172.7" y="415" width="6.9" height="26.5" fill="#F1F1F1"/></svg>
</aside>
<main class="grp" id="editor">
<svg class="i panel" style="left:352px;top:209px;" width="1566" height="767" viewBox="352 209 1566 767"><rect x="353.85" y="210.9" width="1563.2" height="763.3" fill="#EDEDED" stroke="#C2C2C2" stroke-width="1.7"/><rect x="1892.8" y="973.2" width="18" height="2" fill="#F0F0F0"/><polygon points="1895.9,228 1908.3,228 1902.1,221.8" fill="#B9BABA"/><polygon points="1895.6,962 1908,962 1901.8,968" fill="#B9BABA"/></svg>
<svg class="i slide" style="left:453px;top:215px;" width="1337" height="754" viewBox="453 215 1337 754"><rect x="454.5" y="217.1" width="1333.3" height="749.9" fill="#fff" stroke="#BCBEC4" stroke-width="1.6"/></svg>
<svg class="i shapes" style="left:690px;top:335px;" width="420" height="235" viewBox="690 335 420 235"><polygon points="899,452.7 997,346.7 1095,452.7 997,558.7" fill="#4472C4" stroke="#2F528F" stroke-width="1"/><ellipse cx="816" cy="452.4" rx="114.4" ry="108.8" fill="#4472C4" stroke="#2F528F" stroke-width="1.1"/></svg>
<svg class="i selection" style="left:678px;top:320px;" width="442" height="266" viewBox="678 320 442 266"><rect x="688" y="330.4" width="421.2" height="244.6" fill="none" stroke="#888888" stroke-width="3"/><circle cx="688" cy="330.2" r="9.2" fill="#fff"/><circle cx="688" cy="330.2" r="6.8" fill="#808080"/><circle cx="898.6" cy="330.2" r="9.2" fill="#fff"/><circle cx="898.6" cy="330.2" r="6.8" fill="#808080"/><circle cx="1108.9" cy="330.2" r="9.2" fill="#fff"/><circle cx="1108.9" cy="330.2" r="6.8" fill="#808080"/><circle cx="688" cy="452.6" r="9.2" fill="#fff"/><circle cx="688" cy="452.6" r="6.8" fill="#808080"/><circle cx="1108.9" cy="452.6" r="9.2" fill="#fff"/><circle cx="1108.9" cy="452.6" r="6.8" fill="#808080"/><circle cx="688" cy="575" r="9.2" fill="#fff"/><circle cx="688" cy="575" r="6.8" fill="#808080"/><circle cx="898.6" cy="575" r="9.2" fill="#fff"/><circle cx="898.6" cy="575" r="6.8" fill="#808080"/><circle cx="1108.9" cy="575" r="9.2" fill="#fff"/><circle cx="1108.9" cy="575" r="6.8" fill="#808080"/></svg>
</main>
<footer class="grp" id="statusbar">
<div class="b sb" style="left:0px;top:975.1px;width:1918px;height:19px;background:#F4F4F4;"></div>
<span class="t tx34" style="left:22.97px;top:981px;font-size:17.25px;line-height:20px;color:#161616;transform:scaleX(1.0588);">Slide 1 of 1</span>
<span class="t tx35" style="left:135.79px;top:981px;font-size:17.25px;line-height:20px;color:#161616;transform:scaleX(1.0182);">English - United States</span>
<svg class="i" style="left:1474px;top:983px;" width="14" height="9" viewBox="1474 983 14 9"><polygon points="1474.8,990.6 1486.7,990.6 1480.8,983.9" fill="#4a5866"/></svg>
<span class="t tx36" style="left:1499.00px;top:981px;font-size:17.25px;line-height:20px;color:#161616;transform:scaleX(1.0152);">Notes: 0</span>
<svg class="i" style="left:1601px;top:982px;" width="16" height="12" viewBox="1601 982 16 12"><polygon points="1602,983.2 1615.2,991.4 1602,999.6" fill="#4a5866"/></svg>
<svg class="i" style="left:1653px;top:982px;" width="19" height="12" viewBox="1653 982 19 12"><path d="M1654.6 996 V983.9 H1664.6 L1670.2 989.5 V996" fill="#fff" stroke="#4a5866" stroke-width="1.2"/><path d="M1664.4 983.9 V989.7 H1670.2 Z" fill="#4a5866"/><rect x="1658" y="987.6" width="4.6" height="1.2" fill="#4a5866"/><rect x="1658" y="991.6" width="8.6" height="1.2" fill="#4a5866"/></svg>
<svg class="i" style="left:1686px;top:982px;" width="19" height="12" viewBox="1686 982 19 12"><rect x="1687.4" y="983.9" width="16" height="14" fill="#fff" stroke="#4a5866" stroke-width="1.2"/><rect x="1691" y="987.6" width="9" height="1.2" fill="#4a5866"/><rect x="1691" y="991.6" width="9" height="1.2" fill="#4a5866"/></svg>
<svg class="i" style="left:1742px;top:984px;" width="16" height="10" viewBox="1742 984 16 10"><rect x="1743" y="989.8" width="13.8" height="1.8" fill="#4a5866"/></svg>
<span class="t tx37" style="left:1796.83px;top:980px;font-size:17.25px;line-height:20px;color:#8a8a8a;transform:scaleX(0.9750);">69%</span>
<svg class="i" style="left:1871px;top:984px;" width="16" height="10" viewBox="1871 984 16 10"><rect x="1872.4" y="990.8" width="13.8" height="1.8" fill="#4a5866"/><rect x="1878.4" y="985" width="1.8" height="12" fill="#4a5866"/></svg>
</footer><div class="grp" id="minitoolbar">
<div class="b mini" style="left:831px;top:943px;width:300px;height:60px;background:#FDFDFD;box-shadow:2px 2px 3px rgba(0,0,0,.14);"></div>
<svg class="i frame" style="left:829px;top:941px;" width="304" height="60" viewBox="829 941 304 60"><rect x="831.1" y="942.95" width="299.95" height="70" fill="none" stroke="#BEBEBE" stroke-width="1.7"/></svg>
<svg class="i" style="left:849px;top:956px;" width="30" height="33" viewBox="849 956 30 33"><path d="M857.6 966 C857.4 961.4 859.2 957.4 861.6 957.2 C863.8 957.2 865.4 960.4 865.6 964.4" fill="none" stroke="#3b4856" stroke-width="1.25"/><path d="M855.6 969.4 Q859.2 963.8 863.2 962.4 Q864.4 962.2 865 963.2 L870.6 971.4 Q871.2 972.6 870.4 973.6 Q867.8 977 865.4 978.6 Q864.4 979 863.6 978.4 L855.8 972 Q854.8 970.8 855.6 969.4 Z" fill="#fff" stroke="#3b4856" stroke-width="1.25" stroke-linejoin="round"/><path d="M863.9 966.3 C862.6 965.6 859.4 967.6 857.8 970.4 C856.6 972.4 856 975.2 856.4 977.4 C856.8 979.2 858.2 979.2 858.8 977.6 C859.4 975.8 859 973.8 860 972.6 C862 970.6 864.6 967.6 863.9 966.3 Z" fill="#0F75BD"/><rect x="850.8" y="980.7" width="26.6" height="6.7" fill="#fff" stroke="#D0D0D0" stroke-width="1.2"/></svg>
<svg class="i arr" style="left:885.1px;top:969.1px;" width="13.8" height="7.9" viewBox="885.1 969.1 13.8 7.9"><polygon points="886.1,970.1 897.9,970.1 892,976" fill="#4a5866"/></svg>
<svg class="i" style="left:920px;top:956px;" width="31" height="33" viewBox="920 956 31 33"><path d="M940.4 969 V960.4 Q940.4 958.6 938.6 958.6 H925.2 Q923.4 958.6 923.4 960.4 V973.6 Q923.4 975.4 925.2 975.4 H930" fill="none" stroke="#EE3B3B" stroke-width="1.2"/><path d="M929.4 977.8 L931.4 973.2 L940.6 964 L943.8 967.2 L934.4 976.2 Z" fill="#0F75BD"/><path d="M941.4 963.2 L942.6 962 Q943.4 961.4 944.2 962.2 L945.6 963.6 Q946.2 964.4 945.6 965.2 L944.4 966.4 Z" fill="#0F75BD"/><rect x="921" y="980.1" width="28" height="7.8" fill="#D2D2D2"/><rect x="922.1" y="981.2" width="25.8" height="5.2" fill="#4472C4"/></svg>
<svg class="i arr" style="left:956.2px;top:968.8px;" width="13.8" height="8.2" viewBox="956.2 968.8 13.8 8.2"><polygon points="957.2,969.8 969,969.8 963.1,976" fill="#4a5866"/></svg>
<svg class="i" style="left:997px;top:962px;" width="25" height="21" viewBox="997 962 25 21"><rect x="997.8" y="963.8" width="1.2" height="1.1" fill="#3b4856"/><rect x="999.95" y="963.8" width="1.2" height="1.1" fill="#3b4856"/><rect x="1002.1" y="963.8" width="1.2" height="1.1" fill="#3b4856"/><rect x="1004.25" y="963.8" width="1.2" height="1.1" fill="#3b4856"/><rect x="1006.4" y="963.8" width="1.2" height="1.1" fill="#3b4856"/><rect x="1008.55" y="963.8" width="1.2" height="1.1" fill="#3b4856"/><rect x="1010.7" y="963.8" width="1.2" height="1.1" fill="#3b4856"/><rect x="1012.85" y="963.8" width="1.2" height="1.1" fill="#3b4856"/><rect x="1015" y="963.8" width="1.2" height="1.1" fill="#3b4856"/><rect x="1017.15" y="963.8" width="1.2" height="1.1" fill="#3b4856"/><rect x="1019.3" y="963.8" width="1.2" height="1.1" fill="#3b4856"/><rect x="997.8" y="966.6" width="4.6" height="1.6" fill="#3b4856"/><rect x="1007.1" y="966.6" width="4.6" height="1.6" fill="#3b4856"/><rect x="1016.4" y="966.6" width="4.6" height="1.6" fill="#3b4856"/><rect x="997.8" y="970.6" width="2.9" height="3.6" fill="#3b4856"/><rect x="1002.88" y="970.6" width="2.9" height="3.6" fill="#3b4856"/><rect x="1007.96" y="970.6" width="2.9" height="3.6" fill="#3b4856"/><rect x="1013.04" y="970.6" width="2.9" height="3.6" fill="#3b4856"/><rect x="1018.12" y="970.6" width="2.9" height="3.6" fill="#3b4856"/><rect x="997.8" y="977" width="23.2" height="4.8" fill="#3b4856"/></svg>
<svg class="i arr" style="left:1030.2px;top:968.8px;" width="13.8" height="8.2" viewBox="1030.2 968.8 13.8 8.2"><polygon points="1031.2,969.8 1043,969.8 1037.1,976" fill="#4a5866"/></svg>
<svg class="i" style="left:1066px;top:963px;" width="25" height="20" viewBox="1066 963 25 20"><rect x="1067" y="964" width="23" height="1.1" fill="#1297D8"/><rect x="1067" y="967" width="23" height="2" fill="#1297D8"/><rect x="1067" y="971.1" width="23" height="3.8" fill="#27A2DB"/><rect x="1067" y="977.1" width="23" height="4.8" fill="#27A2DB"/></svg>
<svg class="i arr" style="left:1099.2px;top:968.8px;" width="13.8" height="8.2" viewBox="1099.2 968.8 13.8 8.2"><polygon points="1100.2,969.8 1112,969.8 1106.1,976" fill="#4a5866"/></svg>
</div>
<div class="grp" id="contextmenu" role="menu">
<div class="b ctx" style="left:831px;top:280px;width:251px;height:645px;background:#fff;box-shadow:2px 2px 3px rgba(0,0,0,.16);"></div>
<svg class="i frame" style="left:829px;top:278px;" width="256" height="650" viewBox="829 278 256 650"><rect x="831.1" y="279.95" width="250.95" height="645" fill="none" stroke="#BEBEBE" stroke-width="1.7"/></svg>
<svg class="i msep" style="left:889px;top:465.8px;" width="194" height="4" viewBox="889 465.8 194 4"><rect x="890" y="466.9" width="191.3" height="1.8" fill="#C3C3C3"/></svg>
<svg class="i msep" style="left:889px;top:522px;" width="194" height="4" viewBox="889 522 194 4"><rect x="890" y="523.1" width="191.3" height="1.8" fill="#C3C3C3"/></svg>
<svg class="i msep" style="left:889px;top:710px;" width="194" height="4" viewBox="889 710 194 4"><rect x="890" y="711.1" width="191.3" height="1.8" fill="#C3C3C3"/></svg>
<svg class="i msep" style="left:889px;top:810px;" width="194" height="4" viewBox="889 810 194 4"><rect x="890" y="811.1" width="191.3" height="1.8" fill="#C3C3C3"/></svg>
<svg class="i msep" style="left:889px;top:866px;" width="194" height="4" viewBox="889 866 194 4"><rect x="890" y="867.1" width="191.3" height="1.8" fill="#C3C3C3"/></svg>
<div class="grp" role="menuitem"><span class="t mi tx38" style="left:892.29px;top:298px;font-size:18.50px;line-height:21px;color:#161616;transform:scaleX(0.9234);">Cut</span></div>
<div class="grp" role="menuitem"><span class="t mi tx39" style="left:891.92px;top:342px;font-size:18.50px;line-height:21px;color:#161616;transform:scaleX(0.9510);">Copy</span></div>
<div class="grp" role="menuitem"><span class="t mi tx40" style="left:892.29px;top:386px;font-size:18.50px;line-height:21px;color:#161616;transform:scaleX(0.8768);">Paste</span></div>
<div class="grp" role="menuitem"><span class="t mi tx41" style="left:892.20px;top:430px;font-size:18.50px;line-height:21px;color:#161616;transform:scaleX(0.9437);">Paste Options</span></div>
<div class="grp" role="menuitem"><span class="t mi tx42" style="left:892.05px;top:486px;font-size:18.50px;line-height:21px;color:#161616;transform:scaleX(0.9000);">Save as Picture...</span></div>
<div class="grp" role="menuitem"><span class="t mi tx43" style="left:892.18px;top:542px;font-size:18.50px;line-height:21px;color:#B9B9B9;transform:scaleX(0.9579);">Bring Forward</span></div>
<div class="grp" role="menuitem"><span class="t mi tx44" style="left:892.03px;top:586px;font-size:18.50px;line-height:21px;color:#161616;transform:scaleX(0.9306);">Send Backward</span></div>
<div class="grp" role="menuitem"><span class="t mi tx45" style="left:892.02px;top:630px;font-size:18.50px;line-height:21px;color:#161616;transform:scaleX(0.9337);">Send to Back</span></div>
<div class="grp" role="menuitem"><span class="t mi tx46" style="left:892.12px;top:674px;font-size:18.50px;line-height:21px;color:#B9B9B9;transform:scaleX(0.9787);">Bring to Front</span></div>
<div class="grp" role="menuitem"><span class="t mi tx47" style="left:892.36px;top:730px;font-size:18.50px;line-height:21px;color:#B9B9B9;transform:scaleX(0.9469);">Group</span></div>
<div class="grp" role="menuitem"><span class="t mi tx48" style="left:892.01px;top:774px;font-size:18.50px;line-height:21px;color:#161616;transform:scaleX(0.9974);">Ungroup</span></div>
<div class="grp" role="menuitem"><span class="t mi tx49" style="left:892.25px;top:830px;font-size:18.50px;line-height:21px;color:#161616;transform:scaleX(0.8963);">Link...</span></div>
<div class="grp" role="menuitem"><span class="t mi tx50" style="left:892.23px;top:886px;font-size:18.50px;line-height:21px;color:#161616;transform:scaleX(0.9238);">Format Shape...</span></div>
<svg class="i" style="left:1054px;top:432px;" width="10" height="17" viewBox="1054 432 10 17"><polygon points="1055.2,433.2 1062,440.5 1055.2,447.8" fill="#9A9A9A"/></svg>
<svg class="i" style="left:849px;top:295px;" width="20" height="25" viewBox="849 295 20 25"><path d="M852.35 296.00 L859.30 304.40 L863.30 310.40 L861.50 311.90 L856.60 307.40 C853.40 304.40 851.40 301.60 852.35 296.00 Z" fill="#4a5866"/><path d="M865.65 296.00 L858.70 304.40 L854.70 310.40 L856.50 311.90 L861.40 307.40 C864.60 304.40 866.60 301.60 865.65 296.00 Z" fill="#4a5866"/><circle cx="853.80" cy="315.45" r="3.15" fill="none" stroke="#3a3f45" stroke-width="1.35"/><circle cx="864.30" cy="315.45" r="3.15" fill="none" stroke="#3a3f45" stroke-width="1.35"/><rect x="857.85" y="306.90" width="2.30" height="2.20" fill="#27A2DB"/></svg>
<svg class="i" style="left:844px;top:336px;" width="28" height="30" viewBox="844 336 28 30"><path d="M847.20 337.80 H854.20 L858.20 341.80 V358.30 H847.20 Q845.70 358.30 845.70 356.80 V339.30 Q845.70 337.80 847.20 337.80 Z" fill="#fff" stroke="#ABABAB" stroke-width="1.10"/><path d="M854.20 337.90 L858.20 341.90 H854.20 Z" fill="#ABABAB"/><path d="M856.50 343.90 H864.40 L870.30 349.80 V362.80 Q870.30 364.30 868.80 364.30 H856.50 Q855.00 364.30 855.00 362.80 V345.40 Q855.00 343.90 856.50 343.90 Z" fill="#fff" stroke="#4a5866" stroke-width="1.30"/><path d="M864.20 343.70 L870.50 350.00 H865.60 Q864.20 350.00 864.20 348.60 Z" fill="#4a5866"/></svg>
<svg class="i" style="left:846px;top:380px;" width="24" height="30" viewBox="846 380 24 30"><rect x="847.6" y="384.4" width="17.8" height="23.6" rx="1.6" fill="#FCC98D" stroke="#3d4853" stroke-width="1.1"/><rect x="850.9" y="383.6" width="11.2" height="4.6" fill="#fff"/><rect x="853.2" y="381.3" width="6.6" height="4.2" rx="1.3" fill="#fff" stroke="#3d4853" stroke-width="1.1"/><rect x="851.6" y="384.5" width="9.8" height="2.9" rx="0.7" fill="#4E5B67"/><path d="M857.6 391 H864.4 L869.6 396.2 V409.4 H855.8 V392.8 Q855.8 391 857.6 391 Z" fill="#fff"/><path d="M858.2 392.2 H864 L868.4 396.6 V406.8 Q868.4 408.1 867.1 408.1 H858.2 Q856.9 408.1 856.9 406.8 V393.5 Q856.9 392.2 858.2 392.2 Z" fill="#fff" stroke="#9B9D9E" stroke-width="1.1"/><path d="M863.8 392.2 L868.4 396.8 H864.8 Q863.8 396.8 863.8 395.8 Z" fill="#9B9D9E"/></svg>
<svg class="i" style="left:845px;top:424px;" width="26" height="31" viewBox="845 424 26 31"><rect x="846.8" y="428.6" width="17.6" height="23.4" rx="1.6" fill="#FCC98D" stroke="#3d4853" stroke-width="1.1"/><rect x="850" y="427.8" width="11.2" height="4.6" fill="#fff"/><rect x="852.3" y="425.5" width="6.6" height="4.2" rx="1.3" fill="#fff" stroke="#3d4853" stroke-width="1.1"/><rect x="850.7" y="428.7" width="9.8" height="2.9" rx="0.7" fill="#4E5B67"/><circle cx="862.8" cy="447.8" r="7.4" fill="#fff"/><path d="M869.17 446.51 L869.17 449.09 L867.29 449.19 L866.96 449.99 L868.22 451.39 L866.39 453.22 L864.99 451.96 L864.19 452.29 L864.09 454.17 L861.51 454.17 L861.41 452.29 L860.61 451.96 L859.21 453.22 L857.38 451.39 L858.64 449.99 L858.31 449.19 L856.43 449.09 L856.43 446.51 L858.31 446.41 L858.64 445.61 L857.38 444.21 L859.21 442.38 L860.61 443.64 L861.41 443.31 L861.51 441.43 L864.09 441.43 L864.19 443.31 L864.99 443.64 L866.39 442.38 L868.22 444.21 L866.96 445.61 L867.29 446.41 Z" fill="#555C63"/><circle cx="862.8" cy="447.8" r="2.3" fill="#fff"/></svg>
<svg class="i" style="left:843px;top:481px;" width="31" height="29" viewBox="843 481 31 29"><rect x="844.6" y="482.6" width="22" height="18.6" rx="1.2" fill="#fff" stroke="#4a5866" stroke-width="1.2"/><path d="M846.4 487.4 C851.6 487.2 855.8 491.4 856 499.4 H846.4 Z" fill="#3DAB76"/><circle cx="860" cy="486.8" r="1.9" fill="#F68B1F"/><path d="M858.4 491.4 H869 L872.6 495 V506.6 Q872.6 507.8 871.4 507.8 H858.4 Q857.2 507.8 857.2 506.6 V492.6 Q857.2 491.4 858.4 491.4 Z" fill="#fff" stroke="#4a5866" stroke-width="1.2"/><rect x="859.8" y="491.6" width="8" height="5" fill="#3b4856"/><rect x="864.4" y="492.6" width="1.6" height="2.4" fill="#fff"/><rect x="859.6" y="499.8" width="10.8" height="6.4" fill="#86C6E0"/></svg>
<svg class="i" style="left:845px;top:540px;" width="27" height="24" viewBox="845 540 27 24"><polygon points="846.9,556.3 858.5,550.1 870.1,556.3 858.5,562.5" fill="#fff" stroke="#D9D9D9" stroke-width="1.1" stroke-linejoin="miter"/><polygon points="846.4,547.6 858.5,540.9 870.6,547.6 858.5,554.3" fill="#C3E5D7"/></svg>
<svg class="i" style="left:845px;top:584px;" width="27" height="24" viewBox="845 584 27 24"><polygon points="846.4,600.2 858.5,593.5 870.6,600.2 858.5,606.9" fill="#3DAB76"/><polygon points="846.9,591.6 858.5,585.4 870.1,591.6 858.5,597.8" fill="#fff" stroke="#4a5866" stroke-width="1.1" stroke-linejoin="miter"/></svg>
<svg class="i" style="left:845px;top:627px;" width="27" height="26" viewBox="845 627 27 26"><polygon points="846.4,645 858.5,638.3 870.6,645 858.5,651.7" fill="#3DAB76"/><polygon points="846.9,640.4 858.5,634.2 870.1,640.4 858.5,646.6" fill="#fff" stroke="#4a5866" stroke-width="1.1" stroke-linejoin="miter"/><polygon points="846.9,634.6 858.5,628.4 870.1,634.6 858.5,640.8" fill="#fff" stroke="#4a5866" stroke-width="1.1" stroke-linejoin="miter"/></svg>
<svg class="i" style="left:845px;top:671px;" width="27" height="26" viewBox="845 671 27 26"><polygon points="846.9,689 858.5,682.8 870.1,689 858.5,695.2" fill="#fff" stroke="#D9D9D9" stroke-width="1.1" stroke-linejoin="miter"/><polygon points="846.9,684.6 858.5,678.4 870.1,684.6 858.5,690.8" fill="#fff" stroke="#D9D9D9" stroke-width="1.1" stroke-linejoin="miter"/><polygon points="846.4,678.8 858.5,672.1 870.6,678.8 858.5,685.5" fill="#C3E5D7"/></svg>
<svg class="i" style="left:845px;top:727px;" width="28" height="26" viewBox="845 727 28 26"><circle cx="848.5" cy="730.5" r="2.6" fill="#DEDEDE"/><circle cx="848.5" cy="749.6" r="2.6" fill="#DEDEDE"/><circle cx="869.4" cy="730.5" r="2.6" fill="#DEDEDE"/><circle cx="869.4" cy="749.6" r="2.6" fill="#DEDEDE"/><path d="M852 730.5 H866 M852 749.6 H866 M848.5 734 V746 M869.4 734 V746" stroke="#DEDEDE" stroke-width="1.1" fill="none"/><rect x="856" y="736" width="10" height="10" fill="#E4F5EE"/><rect x="852" y="734" width="10" height="10" fill="#C5E6D8"/></svg>
<svg class="i" style="left:844px;top:775px;" width="29" height="23" viewBox="844 775 29 23"><path d="M849 776 H859 V779.6 A3.6 3.6 0 0 0 853.2 783.9 H851.4 Q849 783.9 849 781.6 Z" fill="#3DAB76"/><rect x="858" y="783.2" width="10" height="9.6" rx="1.8" fill="#B4E2D2"/><path d="M847.5 776 V782 M860.6 776 V781.3 H866 M851 785.5 H856.4 V790.8 M869.5 785 V791 M860 794.4 H866" stroke="#93989A" stroke-width="1.2" fill="none"/><circle cx="856.4" cy="781.3" r="2.45" fill="#93989A"/><circle cx="869.4" cy="781.3" r="2.45" fill="#93989A"/><circle cx="847.5" cy="785.5" r="2.45" fill="#93989A"/><circle cx="856.4" cy="794.4" r="2.45" fill="#93989A"/><circle cx="869.4" cy="794.4" r="2.45" fill="#93989A"/></svg>
<svg class="i" style="left:845px;top:826px;" width="28" height="27" viewBox="845 826 28 27"><g fill="none" stroke="#0F75BD" stroke-width="1.25" stroke-linecap="round"><path d="M868.4 841.6 A11.1 11.1 0 1 0 854.4 849.8"/><path d="M857.5 828.2 V841.6"/><path d="M848.8 833 Q857.5 837.6 866.4 833"/><path d="M849.8 845.6 Q851.6 843.8 855 843.2"/></g><g fill="none" stroke="#4B5661" stroke-width="1.35" stroke-linecap="round"><path d="M861.4 843.5 H859.4 A4 4 0 0 0 859.4 851.5 H861.4"/><path d="M865.6 843.5 H867.6 A4 4 0 0 1 867.6 851.5 H865.6"/><path d="M861.4 847.5 H865.6"/></g></svg>
<svg class="i" style="left:846px;top:884px;" width="26" height="24" viewBox="846 884 26 24"><path d="M868.70 885.40 L869.50 885.40 Q870.70 885.80 870.30 887.20 L860.70 896.60 L857.90 893.80 Z" fill="#3b4856"/><path d="M849.90 900.60 C850.70 896.80 854.10 894.60 857.10 895.80 C859.50 897.00 859.70 900.20 857.90 902.60 C856.50 904.60 852.70 905.80 847.30 906.00 C848.90 904.40 849.50 902.60 849.90 900.60 Z" fill="#F68B1F"/><path d="M849.70 901.60 C852.50 901.20 855.50 902.40 857.90 902.60 C856.50 904.60 852.70 905.80 847.30 906.00 C848.70 904.60 849.30 903.20 849.70 901.60 Z" fill="#0F75BD"/></svg>
</div>
<div class="grp" id="annotation">
<svg class="i hl" style="left:822px;top:758px;" width="173" height="61" viewBox="822 758 173 61"><path d="M822.6 758.4 H994.4 V818.7 H822.6 Z M827.1 762.9 V814.2 H989.9 V762.9 Z" fill="#fff" fill-rule="evenodd"/><path d="M827.1 762.9 H989.9 V814.2 H827.1 Z M835.9 771.8 V805.4 H981.1 V771.8 Z" fill="#EA4B4B" fill-rule="evenodd"/></svg>
<svg class="i arrow" style="left:584px;top:756px;" width="212" height="58" viewBox="584 756 212 58"><polygon points="585.6,779.3 754.4,772.1 747.9,757.6 794.4,786.5 746,812.6 753.3,798.7" fill="#EA4B4B"/></svg>
</div>
</div>
</body>
</html>
